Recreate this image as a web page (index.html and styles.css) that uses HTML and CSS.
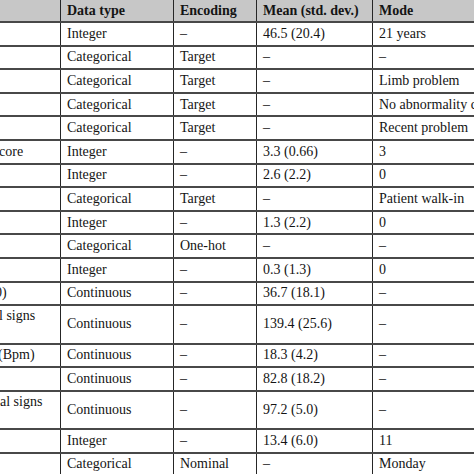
FILE: index.html
```html
<!DOCTYPE html>
<html>
<head>
<meta charset="utf-8">
<link rel="stylesheet" href="styles.css">
</head>
<body>
<div class="table">
  <div class="row head">
    <div class="c c1"></div>
    <div class="c">Data type</div>
    <div class="c">Encoding</div>
    <div class="c">Mean (std. dev.)</div>
    <div class="c">Mode</div>
  </div>
  <div class="row"><div class="c c1"></div><div class="c">Integer</div><div class="c">–</div><div class="c">46.5 (20.4)</div><div class="c">21 years</div></div>
  <div class="row"><div class="c c1"></div><div class="c">Categorical</div><div class="c">Target</div><div class="c">–</div><div class="c">–</div></div>
  <div class="row"><div class="c c1"></div><div class="c">Categorical</div><div class="c">Target</div><div class="c">–</div><div class="c">Limb problem</div></div>
  <div class="row"><div class="c c1"></div><div class="c">Categorical</div><div class="c">Target</div><div class="c">–</div><div class="c">No abnormality detected</div></div>
  <div class="row"><div class="c c1"></div><div class="c">Categorical</div><div class="c">Target</div><div class="c">–</div><div class="c">Recent problem</div></div>
  <div class="row"><div class="c c1 cut1">core</div><div class="c">Integer</div><div class="c">–</div><div class="c">3.3 (0.66)</div><div class="c">3</div></div>
  <div class="row"><div class="c c1"></div><div class="c">Integer</div><div class="c">–</div><div class="c">2.6 (2.2)</div><div class="c">0</div></div>
  <div class="row"><div class="c c1"></div><div class="c">Categorical</div><div class="c">Target</div><div class="c">–</div><div class="c">Patient walk-in</div></div>
  <div class="row"><div class="c c1"></div><div class="c">Integer</div><div class="c">–</div><div class="c">1.3 (2.2)</div><div class="c">0</div></div>
  <div class="row"><div class="c c1"></div><div class="c">Categorical</div><div class="c">One-hot</div><div class="c">–</div><div class="c">–</div></div>
  <div class="row"><div class="c c1"></div><div class="c">Integer</div><div class="c">–</div><div class="c">0.3 (1.3)</div><div class="c">0</div></div>
  <div class="row"><div class="c c1 cut2">0)</div><div class="c">Continuous</div><div class="c">–</div><div class="c">36.7 (18.1)</div><div class="c">–</div></div>
  <div class="row tall"><div class="c c1 cut3">l signs<br>&nbsp;</div><div class="c">Continuous</div><div class="c">–</div><div class="c">139.4 (25.6)</div><div class="c">–</div></div>
  <div class="row"><div class="c c1 cut4">(Bpm)</div><div class="c">Continuous</div><div class="c">–</div><div class="c">18.3 (4.2)</div><div class="c">–</div></div>
  <div class="row"><div class="c c1"></div><div class="c">Continuous</div><div class="c">–</div><div class="c">82.8 (18.2)</div><div class="c">–</div></div>
  <div class="row tall"><div class="c c1 cut5">al signs<br>&nbsp;</div><div class="c">Continuous</div><div class="c">–</div><div class="c">97.2 (5.0)</div><div class="c">–</div></div>
  <div class="row"><div class="c c1"></div><div class="c">Integer</div><div class="c">–</div><div class="c">13.4 (6.0)</div><div class="c">11</div></div>
  <div class="row"><div class="c c1"></div><div class="c">Categorical</div><div class="c">Nominal</div><div class="c">–</div><div class="c">Monday</div></div>
</div>
</body>
</html>
```
FILE: styles.css
```css
html, body {
  margin: 0;
  padding: 0;
  width: 474px;
  height: 474px;
  overflow: hidden;
  background: #ffffff;
}

.table {
  display: flex;
  flex-direction: column;
  width: 474px;
  font-family: "Liberation Serif", "Times New Roman", serif;
  font-size: 14px;
  color: #141414;
}

.row {
  display: grid;
  grid-template-columns: 60px 113px 83px 116px 1fr;
  height: 23.6px;
  box-sizing: border-box;
  border-bottom: 2px solid #484848;
  flex: none;
}

.row.head {
  height: 23px;
  background: #c7c7c7;
  font-weight: bold;
}

.row.tall {
  height: 38.4px;
}

.c {
  display: flex;
  align-items: center;
  box-sizing: border-box;
  padding-left: 6px;
  border-left: 1px solid #262626;
  white-space: nowrap;
  overflow: visible;
  line-height: 16px;
  min-width: 0;
}

.c1 {
  border-left: none;
  padding-left: 0;
  overflow: hidden;
}

.cut1 { text-indent: -1px; }
.cut2 { text-indent: -5px; }
.cut3 { text-indent: -1px; }
.cut4 { text-indent: -2px; }
.cut5 { text-indent: 0; }
```
